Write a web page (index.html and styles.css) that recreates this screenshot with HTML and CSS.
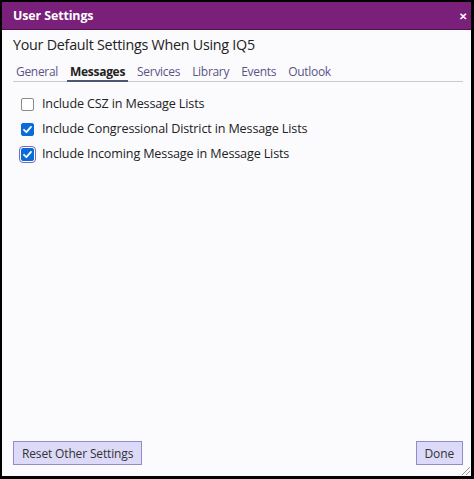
FILE: index.html
```html
<!DOCTYPE html>
<html>
<head>
<meta charset="utf-8">
<link rel="stylesheet" href="styles.css">
</head>
<body>
<div class="dialog">
  <div class="titlebar">
    <span class="title">User Settings</span>
    <span class="close">&#x2715;</span>
  </div>
  <div class="content">
    <h1 class="heading">Your Default Settings When Using IQ5</h1>
    <div class="tabs">
      <span class="tab">General</span>
      <span class="tab active">Messages</span>
      <span class="tab">Services</span>
      <span class="tab">Library</span>
      <span class="tab">Events</span>
      <span class="tab">Outlook</span>
    </div>
    <div class="options">
      <label class="option"><span class="box"></span>Include CSZ in Message Lists</label>
      <label class="option"><span class="box checked"><svg viewBox="0 0 13 13" width="13" height="13"><path d="M3 6.8 L5.4 9.2 L10 3.9" fill="none" stroke="#fff" stroke-width="1.8" stroke-linecap="round" stroke-linejoin="round"/></svg></span>Include Congressional District in Message Lists</label>
      <label class="option"><span class="box checked focus"><svg viewBox="0 0 13 13" width="13" height="13"><path d="M3 6.8 L5.4 9.2 L10 3.9" fill="none" stroke="#fff" stroke-width="1.8" stroke-linecap="round" stroke-linejoin="round"/></svg></span>Include Incoming Message in Message Lists</label>
    </div>
    <div class="spacer"></div>
    <div class="footer">
      <button class="btn">Reset Other Settings</button>
      <button class="btn">Done</button>
    </div>
  </div>
  <div class="grip"></div>
</div>
</body>
</html>
```
FILE: styles.css
```css
html, body {
  margin: 0;
  padding: 0;
  background: #000;
  height: 100%;
}
body {
  font-family: "Open Sans", "Noto Sans", sans-serif;
  box-sizing: border-box;
  padding: 2px 3px 3px 2px;
}
.dialog {
  position: relative;
  height: 100%;
  background: #fbfbfe;
  display: flex;
  flex-direction: column;
}
.titlebar {
  height: 27px;
  background: #7a1f7a;
  border-bottom: 1px solid #4e1450;
  display: flex;
  align-items: center;
  justify-content: space-between;
  padding: 0 4px 0 11px;
}
.title {
  color: #fff;
  font-weight: 700;
  font-size: 12.4px;
  letter-spacing: -0.1px;
}
.close {
  color: #fff;
  font-weight: 700;
  font-size: 10px;
}
.content {
  flex: 1;
  display: flex;
  flex-direction: column;
  padding: 0 8px 11px 11px;
}
.heading {
  margin: 5px 0 0 0;
  font-size: 14.3px;
  font-weight: 400;
  color: #222;
  letter-spacing: -0.25px;
}
.tabs {
  display: flex;
  margin-top: 10px;
  border-bottom: 1px solid #c9c9d2;
  padding-left: 0;
}
.tab {
  font-size: 12px;
  line-height: 15px;
  color: #5c5484;
  padding: 0 3px 1px 3px;
  margin-right: 6px;
  letter-spacing: -0.3px;
}
.tab.active {
  font-weight: 700;
  color: #222;
  border-bottom: 2px solid #4f5770;
  margin-bottom: -1px;
}
.options {
  display: flex;
  flex-direction: column;
  gap: 7px;
  margin-top: 13px;
  padding-left: 8px;
}
.option {
  display: flex;
  align-items: center;
  font-size: 12.6px;
  line-height: 18px;
  color: #222;
  height: 18px;
  letter-spacing: -0.15px;
}
.box {
  width: 11px;
  height: 11px;
  border: 1px solid #8a8a8a;
  border-radius: 2px;
  background: #fff;
  margin-right: 8px;
  position: relative;
  flex: none;
}
.box.checked {
  background: #0a6cd8;
  border-color: #0a6cd8;
}
.box svg {
  position: absolute;
  left: -1px;
  top: -1px;
}
.box.focus {
  outline: 1px solid #7a68b8;
  outline-offset: 1px;
}
.spacer {
  flex: 1;
}
.footer {
  display: flex;
  justify-content: space-between;
}
.btn {
  font-family: inherit;
  font-size: 12px;
  color: #333;
  background: #dcdaf8;
  border: 1px solid #8f8dc8;
  height: 24px;
  padding: 0 8px;
  letter-spacing: -0.15px;
}
.grip {
  position: absolute;
  right: 1px;
  bottom: 1px;
  width: 8px;
  height: 8px;
  background: linear-gradient(135deg, transparent 45%, #999 45%, #999 55%, transparent 55%, transparent 70%, #999 70%, #999 80%, transparent 80%);
}
```
